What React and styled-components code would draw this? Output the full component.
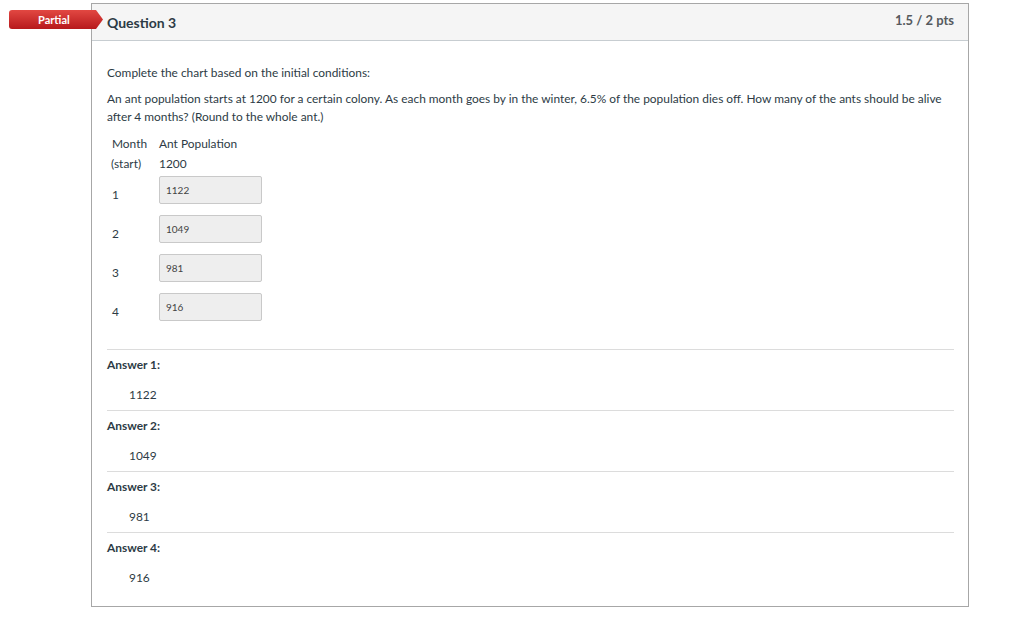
import React from "react";
import styled, { createGlobalStyle } from "styled-components";

const Global = createGlobalStyle`
  html, body { margin: 0; padding: 0; background: #fff; }
  body { font-family: Lato, "Helvetica Neue", Helvetica, Arial, sans-serif; color: #2d3b45; }
  * { box-sizing: border-box; }
`;

const Page = styled.div`
  position: relative;
  width: 1024px;
  height: 622px;
  padding: 3px 0 0 91px;
`;

const Badge = styled.div`
  position: absolute;
  left: 9px;
  top: 10px;
  width: 94px;
  height: 19px;
  background: linear-gradient(#e24842, #b7191c);
  clip-path: polygon(0 0, 87px 0, 94px 50%, 87px 100%, 0 100%);
  border-radius: 3px 0 0 3px;
  color: #fff;
  font-size: 11px;
  font-weight: 700;
  line-height: 19px;
  padding-left: 29px;
`;

const Panel = styled.div`
  width: 878px;
  height: 604px;
  border: 1px solid #a7a7a7;
  background: #fff;
`;

const Header = styled.div`
  height: 37px;
  background: #f5f5f5;
  border-bottom: 1px solid #c7cdd1;
  display: flex;
  align-items: center;
  justify-content: space-between;
  padding: 0 14px 0 15px;
`;

const Title = styled.div`
  font-size: 14px;
  font-weight: 700;
  color: #2d3b45;
`;

const Points = styled.div`
  font-size: 13px;
  font-weight: 700;
  color: #565a5e;
  padding-bottom: 4px;
`;

const Body = styled.div`
  padding: 23px 14px 0 15px;
  font-size: 11.92px;
  line-height: 18px;
`;

const Para = styled.p`
  margin: 0 0 8px;
`;

const Table = styled.div`
  display: grid;
  grid-template-columns: 52px auto;
  justify-content: start;
  margin-top: 8px;
  align-items: center;
`;

const Cell = styled.div`
  height: ${(p) => (p.$tall ? "39px" : "20px")};
  padding-top: ${(p) => (p.$tall ? "3px" : "0")};
  padding-left: ${(p) => p.$indent || 0}px;
  display: flex;
  align-items: center;
`;

const InputCell = styled.div`
  height: 39px;
  padding-top: 2px;
`;

const Field = styled.div`
  width: 103px;
  height: 28px;
  background: #eeeeee;
  border: 1px solid #c9c9c9;
  border-radius: 2px;
  font-size: 10px;
  color: #444;
  line-height: 26px;
  padding-left: 6px;
`;

const Answers = styled.div`
  margin-top: 19px;
`;

const AnswerBlock = styled.div`
  border-top: 1px solid #dcdcdc;
  padding: 6px 0;
`;

const AnswerLabel = styled.div`
  font-weight: 700;
`;

const AnswerValue = styled.div`
  margin-top: 12px;
  padding-left: 22px;
`;

const rows = [
  ["1", "1122"],
  ["2", "1049"],
  ["3", "981"],
  ["4", "916"],
];

export default function App() {
  return (
    <Page>
      <Global />
      <Badge>Partial</Badge>
      <Panel>
        <Header>
          <Title>Question 3</Title>
          <Points>1.5 / 2 pts</Points>
        </Header>
        <Body>
          <Para>Complete the chart based on the initial conditions:</Para>
          <Para>
            An ant population starts at 1200 for a certain colony. As each month goes by in the winter, 6.5% of the
            population dies off. How many of the ants should be alive after 4 months? (Round to the whole ant.)
          </Para>
          <Table>
            <Cell $indent={5}>Month</Cell>
            <Cell>Ant Population</Cell>
            <Cell $indent={4}>(start)</Cell>
            <Cell>1200</Cell>
            {rows.map(([m, v]) => (
              <React.Fragment key={m}>
                <Cell $tall $indent={5}>{m}</Cell>
                <InputCell>
                  <Field>{v}</Field>
                </InputCell>
              </React.Fragment>
            ))}
          </Table>
          <Answers>
            {rows.map(([m, v]) => (
              <AnswerBlock key={m}>
                <AnswerLabel>Answer {m}:</AnswerLabel>
                <AnswerValue>{v}</AnswerValue>
              </AnswerBlock>
            ))}
          </Answers>
        </Body>
      </Panel>
    </Page>
  );
}
